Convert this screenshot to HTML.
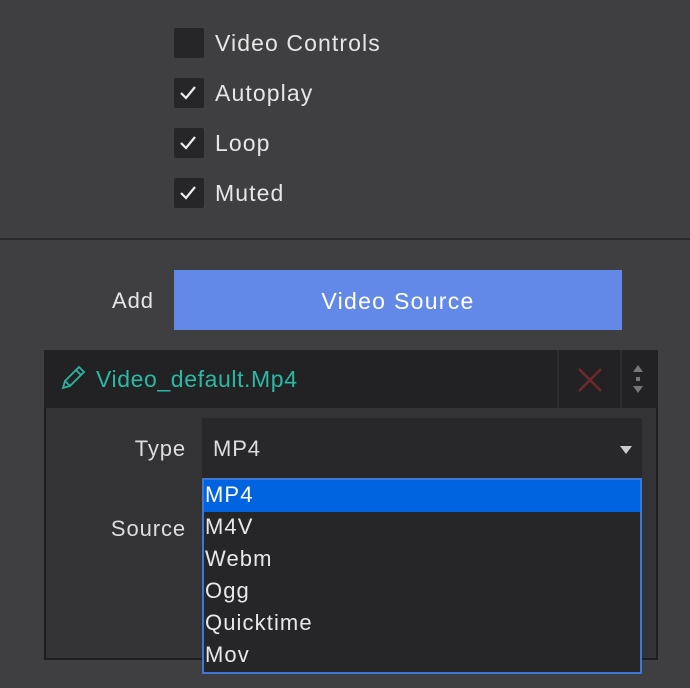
<!DOCTYPE html>
<html><head><style>
*{margin:0;padding:0;box-sizing:border-box}
body{width:690px;height:688px;background:#3f3f41;font-family:"Liberation Sans",sans-serif;color:#e6e6e6;position:relative;overflow:hidden;letter-spacing:0.9px}
.a{position:absolute}
.cb{position:absolute;left:174px;width:30px;height:30px;background:#262628;border-radius:2px}
.lb{position:absolute;left:215px;font-size:23px;line-height:30px;letter-spacing:1.1px}
.opt{position:absolute;left:205px;font-size:22px;line-height:32px;color:#e8e8e8;letter-spacing:1.1px}
</style></head><body>
<div class="cb" style="top:28px"></div><div class="lb" style="top:28px">Video Controls</div>
<div class="cb" style="top:78px"><svg width="30" height="30"><path d="M7 15 L12 20 L21 9" stroke="#eee" stroke-width="2.2" fill="none"/></svg></div><div class="lb" style="top:78px">Autoplay</div>
<div class="cb" style="top:128px"><svg width="30" height="30"><path d="M7 15 L12 20 L21 9" stroke="#eee" stroke-width="2.2" fill="none"/></svg></div><div class="lb" style="top:128px">Loop</div>
<div class="cb" style="top:178px"><svg width="30" height="30"><path d="M7 15 L12 20 L21 9" stroke="#eee" stroke-width="2.2" fill="none"/></svg></div><div class="lb" style="top:178px">Muted</div>
<div class="a" style="left:0;top:238px;width:690px;height:2px;background:#2a2a2c"></div>
<div class="a" style="left:112px;top:286px;font-size:22px;line-height:30px">Add</div>
<div class="a" style="left:174px;top:270px;width:448px;height:60px;background:#6389e8;color:#fff;font-size:23px;line-height:62px;text-align:center;letter-spacing:1.3px">Video Source</div>
<div class="a" style="left:44px;top:350px;width:614px;height:310px;background:#333335;border:2px solid #1e1e20"></div>
<div class="a" style="left:44px;top:350px;width:614px;height:58px;background:#222224"></div>
<div class="a" style="left:557px;top:350px;width:2px;height:58px;background:#2d2d2f"></div>
<div class="a" style="left:620px;top:350px;width:2px;height:58px;background:#2d2d2f"></div>
<svg class="a" style="left:60px;top:364px" width="28" height="28"><path d="M3 24 L5 17 L19 3 L24 8 L10 22 Z M16 6 L21 11 M5 17 L10 22" stroke="#2bb59f" stroke-width="1.8" fill="none"/></svg>
<div class="a" style="left:96px;top:364px;font-size:23px;line-height:30px;color:#2bb9a4;letter-spacing:0.6px">Video_default.Mp4</div>
<svg class="a" style="left:576px;top:366px" width="28" height="28"><path d="M3 3 L25 25 M25 3 L3 25" stroke="#6e2a2a" stroke-width="2.5"/></svg>
<svg class="a" style="left:630px;top:362px" width="16" height="34"><path d="M3 10 L8 3 L13 10 Z M3 24 L8 31 L13 24 Z" fill="#777"/><rect x="6" y="15" width="4" height="4" fill="#777"/></svg>
<div class="a" style="left:86px;width:100px;text-align:right;top:434px;font-size:22px;line-height:30px;color:#ddd">Type</div>
<div class="a" style="left:66px;width:120px;text-align:right;top:514px;font-size:22px;line-height:30px;color:#ddd">Source</div>
<div class="a" style="left:202px;top:418px;width:440px;height:60px;background:#28282a"></div>
<div class="a" style="left:213px;top:434px;font-size:22px;line-height:30px;color:#ddd">MP4</div>
<svg class="a" style="left:619px;top:445px" width="14" height="10"><path d="M1 1 L13 1 L7 9 Z" fill="#ccc"/></svg>
<div class="a" style="left:202px;top:478px;width:440px;height:196px;background:#262628;border:2px solid #3b78d8"></div>
<div class="a" style="left:204px;top:480px;width:436px;height:32px;background:#0064e0"></div>
<div class="opt" style="top:479px;color:#fff">MP4</div>
<div class="opt" style="top:511px">M4V</div>
<div class="opt" style="top:543px">Webm</div>
<div class="opt" style="top:575px">Ogg</div>
<div class="opt" style="top:607px">Quicktime</div>
<div class="opt" style="top:639px">Mov</div>
</body></html>
